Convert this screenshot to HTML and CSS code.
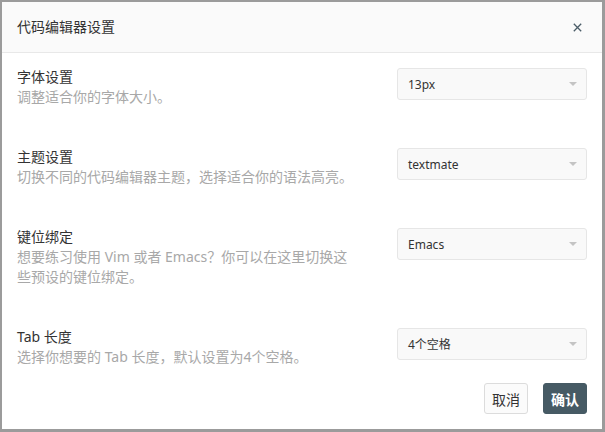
FILE: index.html
```html
<!DOCTYPE html>
<html lang="zh-CN">
<head>
<meta charset="utf-8">
<link rel="stylesheet" href="styles.css">
</head>
<body>
<div class="modal">
  <div class="modal-header">
    <div class="modal-title">代码编辑器设置</div>
    <button class="close" aria-label="关闭">
      <svg width="9" height="9" viewBox="0 0 9 9"><path d="M0.8 0.8L8.2 8.2M8.2 0.8L0.8 8.2" stroke="#4b5d68" stroke-width="1.3" fill="none"/></svg>
    </button>
  </div>
  <div class="modal-body">
    <div class="row">
      <div class="info">
        <div class="label">字体设置</div>
        <div class="desc">调整适合你的字体大小。</div>
      </div>
      <div class="select"><span>13px</span><i class="caret"></i></div>
    </div>
    <div class="row">
      <div class="info">
        <div class="label">主题设置</div>
        <div class="desc">切换不同的代码编辑器主题，选择适合你的语法高亮。</div>
      </div>
      <div class="select"><span>textmate</span><i class="caret"></i></div>
    </div>
    <div class="row">
      <div class="info">
        <div class="label">键位绑定</div>
        <div class="desc">想要练习使用 Vim 或者 Emacs？你可以在这里切换这<br>些预设的键位绑定。</div>
      </div>
      <div class="select"><span>Emacs</span><i class="caret"></i></div>
    </div>
    <div class="row">
      <div class="info">
        <div class="label">Tab 长度</div>
        <div class="desc">选择你想要的 Tab 长度，默认设置为4个空格。</div>
      </div>
      <div class="select"><span>4个空格</span><i class="caret"></i></div>
    </div>
  </div>
  <div class="modal-footer">
    <button class="btn btn-default">取消</button>
    <button class="btn btn-primary">确认</button>
  </div>
</div>
</body>
</html>
```
FILE: styles.css
```css
html, body {
  margin: 0;
  padding: 0;
  background: #9b9b9b;
  height: 100%;
  overflow: hidden;
}
body {
  font-family: "Noto Sans", "Noto Sans CJK SC", sans-serif;
  color: #333;
}
.modal {
  margin: 2px 0 0 2px;
  width: 600px;
  height: 427px;
  background: #fff;
  display: flex;
  flex-direction: column;
  box-sizing: border-box;
}
.modal-header {
  height: 50px;
  background: #fafafa;
  border-bottom: 1px solid #e8e8e8;
  display: flex;
  align-items: center;
  justify-content: space-between;
  padding: 0 20px 0 15px;
  flex-shrink: 0;
}
.modal-title {
  font-size: 14px;
  color: #333;
  line-height: 20px;
}
.close {
  border: 0;
  background: none;
  padding: 0;
  width: 9px;
  height: 9px;
  display: flex;
}
.modal-body {
  padding: 14px 15px 0 15px;
  display: flex;
  flex-direction: column;
  gap: 40px;
}
.row {
  display: flex;
  justify-content: space-between;
  align-items: flex-start;
}
.info {
  width: 345px;
}
.label {
  font-size: 14px;
  line-height: 20px;
  color: #333;
}
.desc {
  font-size: 14px;
  line-height: 20px;
  color: #a8a8a8;
}
.select {
  width: 190px;
  height: 32px;
  box-sizing: border-box;
  margin-top: 1px;
  border: 1px solid #e6e6e6;
  border-radius: 3px;
  background: #f9f9f9;
  display: flex;
  align-items: center;
  justify-content: space-between;
  padding: 0 9px 0 10px;
  font-size: 12px;
  color: #333;
}
.caret {
  width: 0;
  height: 0;
  border-left: 4px solid transparent;
  border-right: 4px solid transparent;
  border-top: 4px solid #c4c4c4;
}
.modal-footer {
  display: flex;
  justify-content: flex-end;
  gap: 15px;
  padding: 16px 15px 15px 0;
}
.btn {
  font-family: "Noto Sans", "Noto Sans CJK SC", sans-serif;
  font-size: 14px;
  height: 31px;
  width: 44px;
  padding: 0;
  border-radius: 3px;
  box-sizing: border-box;
}
.btn-default {
  background: #fbfbfb;
  border: 1px solid #dcdcdc;
  color: #333;
}
.btn-primary {
  background: #465a64;
  border: 1px solid #465a64;
  color: #fff;
  font-weight: 700;
}
```
